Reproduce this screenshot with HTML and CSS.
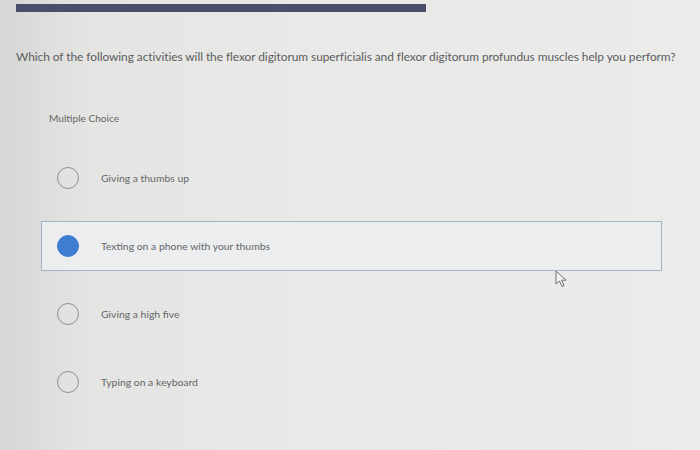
FILE: index.html
```html
<!DOCTYPE html>
<html lang="en">
<head>
    <meta charset="UTF-8">
    <meta name="viewport" content="width=device-width, initial-scale=1.0">
    <title>Question</title>
    <link rel="stylesheet" href="styles.css">
</head>
<body>
    <div class="progress"></div>

    <p class="question">Which of the following activities will the flexor digitorum superficialis and flexor digitorum profundus muscles help you perform?</p>

    <div class="answers">
        <div class="kind">Multiple Choice</div>

        <div class="option">
            <span class="radio"></span>
            <span class="label">Giving a thumbs up</span>
        </div>
        <div class="option selected">
            <span class="radio"></span>
            <span class="label">Texting on a phone with your thumbs</span>
        </div>
        <div class="option">
            <span class="radio"></span>
            <span class="label">Giving a high five</span>
        </div>
        <div class="option">
            <span class="radio"></span>
            <span class="label">Typing on a keyboard</span>
        </div>
    </div>

    <!-- mouse pointer -->
    <svg class="pointer" width="14" height="18" viewBox="0 0 14 18">
        <path d="M1 1 L1 14 L4.5 11 L7 16.5 L9 15.5 L6.6 10.2 L11 10.2 Z" fill="#f4f4f4" stroke="#6b6f75" stroke-width="1" stroke-linejoin="round"/>
    </svg>
</body>
</html>
```

FILE: styles.css
```css
body { font-family: Lato, "Open Sans", sans-serif; margin: 0; padding: 0; height: 450px; overflow: hidden; position: relative; color: #5b5d60; background: linear-gradient(to right, #d6d6d4 0%, #e4e4e2 12%, #e9e9e7 45%, #ebebea 100%); }
.progress { margin: 4px 0 0 16px; width: 410px; height: 8px; background-color: #465168; }
.question { margin: 38px 0 0 16px; font-size: 11.9px; line-height: 14px; letter-spacing: -0.05px; }
.answers { margin: 48px 0 0 20px; }
.kind { margin-left: 29px; font-size: 10.1px; line-height: 12px; color: #666; }
.option { display: flex; align-items: center; height: 50px; margin: 0 38px 18px 21px; padding-left: 15px; border: 1px solid transparent; box-sizing: border-box; }
.answers .kind + .option { margin-top: 29px; }
.option.selected { background-color: #ebedef; border-color: #a3b4c6; }
.radio { width: 22px; height: 22px; border-radius: 50%; border: 1.5px solid #8b909a; box-sizing: border-box; flex: none; }
.option.selected .radio { background-color: #3e7ed0; border-color: #3e7ed0; }
.label { margin-left: 22px; font-size: 10.4px; letter-spacing: 0; color: #646668; }
.pointer { position: absolute; left: 555px; top: 270px; }
```
